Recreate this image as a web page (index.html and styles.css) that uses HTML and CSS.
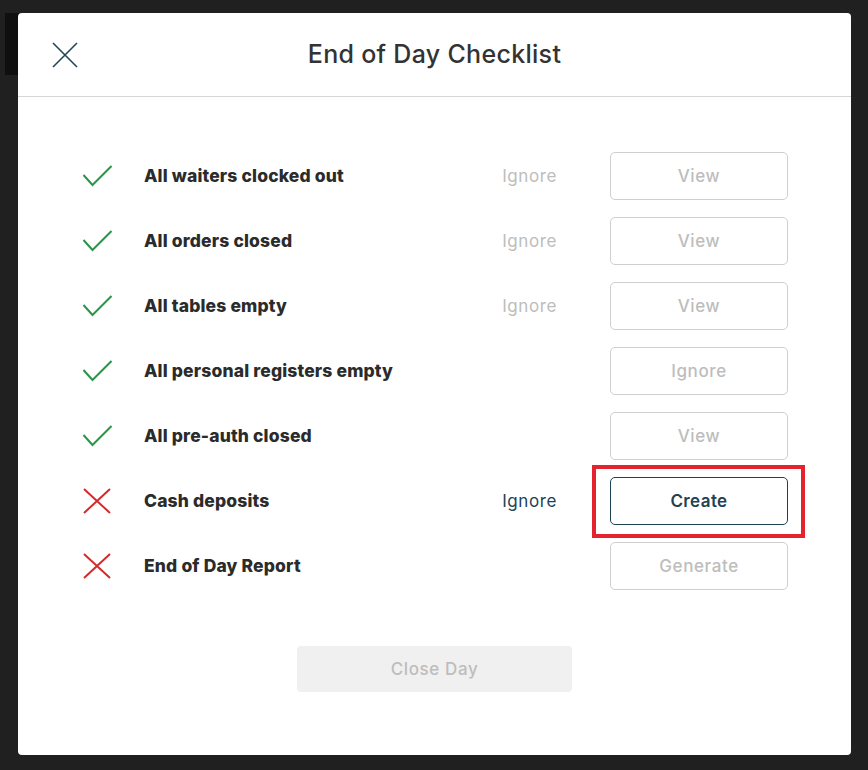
FILE: index.html
```html
<!DOCTYPE html>
<html>
<head>
<meta charset="utf-8">
<link rel="stylesheet" href="styles.css">
</head>
<body>
<div class="backdrop-tab"></div>
<div class="modal">
  <header class="modal-header">
    <button class="close-btn" aria-label="Close">
      <svg width="26" height="26" viewBox="0 0 26 26"><path d="M1 1 L25 25 M25 1 L1 25" stroke="#244656" stroke-width="1.6" fill="none"/></svg>
    </button>
    <h1 class="title">End of Day Checklist</h1>
  </header>
  <div class="checklist">
    <div class="row">
      <span class="status"><svg width="30" height="24" viewBox="0 0 30 24"><path d="M1.5 11 L10.5 21 L29.5 2" stroke="#2a9447" stroke-width="2" fill="none"/></svg></span>
      <span class="label">All waiters clocked out</span>
      <span class="ignore">Ignore</span>
      <span class="btn">View</span>
    </div>
    <div class="row">
      <span class="status"><svg width="30" height="24" viewBox="0 0 30 24"><path d="M1.5 11 L10.5 21 L29.5 2" stroke="#2a9447" stroke-width="2" fill="none"/></svg></span>
      <span class="label">All orders closed</span>
      <span class="ignore">Ignore</span>
      <span class="btn">View</span>
    </div>
    <div class="row">
      <span class="status"><svg width="30" height="24" viewBox="0 0 30 24"><path d="M1.5 11 L10.5 21 L29.5 2" stroke="#2a9447" stroke-width="2" fill="none"/></svg></span>
      <span class="label">All tables empty</span>
      <span class="ignore">Ignore</span>
      <span class="btn">View</span>
    </div>
    <div class="row">
      <span class="status"><svg width="30" height="24" viewBox="0 0 30 24"><path d="M1.5 11 L10.5 21 L29.5 2" stroke="#2a9447" stroke-width="2" fill="none"/></svg></span>
      <span class="label">All personal registers empty</span>
      <span class="ignore"></span>
      <span class="btn">Ignore</span>
    </div>
    <div class="row">
      <span class="status"><svg width="30" height="24" viewBox="0 0 30 24"><path d="M1.5 11 L10.5 21 L29.5 2" stroke="#2a9447" stroke-width="2" fill="none"/></svg></span>
      <span class="label">All pre-auth closed</span>
      <span class="ignore"></span>
      <span class="btn">View</span>
    </div>
    <div class="row">
      <span class="status"><svg width="30" height="26" viewBox="0 0 30 26"><path d="M2 1 L28 25 M28 1 L2 25" stroke="#d42a2a" stroke-width="2" fill="none"/></svg></span>
      <span class="label">Cash deposits</span>
      <span class="ignore active">Ignore</span>
      <span class="btn-wrap"><span class="btn primary">Create</span><span class="highlight"></span></span>
    </div>
    <div class="row">
      <span class="status"><svg width="30" height="26" viewBox="0 0 30 26"><path d="M2 1 L28 25 M28 1 L2 25" stroke="#d42a2a" stroke-width="2" fill="none"/></svg></span>
      <span class="label">End of Day Report</span>
      <span class="ignore"></span>
      <span class="btn">Generate</span>
    </div>
  </div>
  <div class="footer">
    <span class="close-day">Close Day</span>
  </div>
</div>
</body>
</html>
```
FILE: styles.css
```css
* { box-sizing: border-box; }
html, body { margin: 0; padding: 0; }
body {
  background: #202020;
  width: 868px;
  height: 770px;
  font-family: Inter, "Noto Sans", sans-serif;
  position: relative;
  overflow: hidden;
  padding: 13px 17px 15px 18px;
}
.backdrop-tab {
  position: absolute;
  left: 5px;
  top: 13px;
  width: 14px;
  height: 62px;
  background: #0f0f0f;
}
.modal {
  position: relative;
  background: #fff;
  width: 833px;
  height: 742px;
  border-radius: 4px;
}
.modal-header {
  height: 84px;
  border-bottom: 1px solid #d6d6d6;
  display: flex;
  align-items: center;
  justify-content: center;
  position: relative;
}
.close-btn {
  position: absolute;
  left: 34px;
  top: 29px;
  width: 26px;
  height: 26px;
  padding: 0;
  border: none;
  background: none;
  display: block;
}
.close-btn svg { display: block; }
.title {
  margin: 0;
  font-size: 25px;
  font-weight: 500;
  color: #333;
  letter-spacing: 0.3px;
  padding-bottom: 2px;
}
.checklist {
  padding: 55px 63px 0 64px;
  display: flex;
  flex-direction: column;
  gap: 17px;
}
.row {
  height: 48px;
  display: flex;
  align-items: center;
}
.status {
  width: 30px;
  margin-right: 32px;
  display: flex;
  align-items: center;
}
.status svg { display: block; }
.label {
  flex: 1;
  font-size: 17.5px;
  font-weight: 800;
  color: #2b2b2b;
  letter-spacing: 0.15px;
  padding-bottom: 2px;
}
.ignore {
  font-size: 17px;
  color: #bdbdbd;
  margin-right: 53px;
  letter-spacing: 0.6px;
}
.ignore.active { color: #1d4354; }
.btn {
  width: 178px;
  height: 48px;
  border: 1.5px solid #cfcfcf;
  border-radius: 5px;
  display: flex;
  align-items: center;
  justify-content: center;
  font-size: 17px;
  font-weight: 500;
  color: #bdbdbd;
  letter-spacing: 0.6px;
}
.btn-wrap {
  position: relative;
  display: block;
}
.btn.primary {
  border-color: #1d4354;
  color: #1d4354;
  font-weight: 600;
  letter-spacing: 0.4px;
}
.highlight {
  position: absolute;
  left: -18px;
  top: -12px;
  right: -17px;
  bottom: -13px;
  border: 4.5px solid #e5232e;
  pointer-events: none;
}
.footer {
  display: flex;
  justify-content: center;
  padding-top: 56px;
}
.close-day {
  width: 275px;
  height: 46px;
  background: #f0f0f0;
  border-radius: 4px;
  display: flex;
  align-items: center;
  justify-content: center;
  font-size: 17px;
  font-weight: 500;
  color: #bdbdbd;
  letter-spacing: 0.6px;
}
```
